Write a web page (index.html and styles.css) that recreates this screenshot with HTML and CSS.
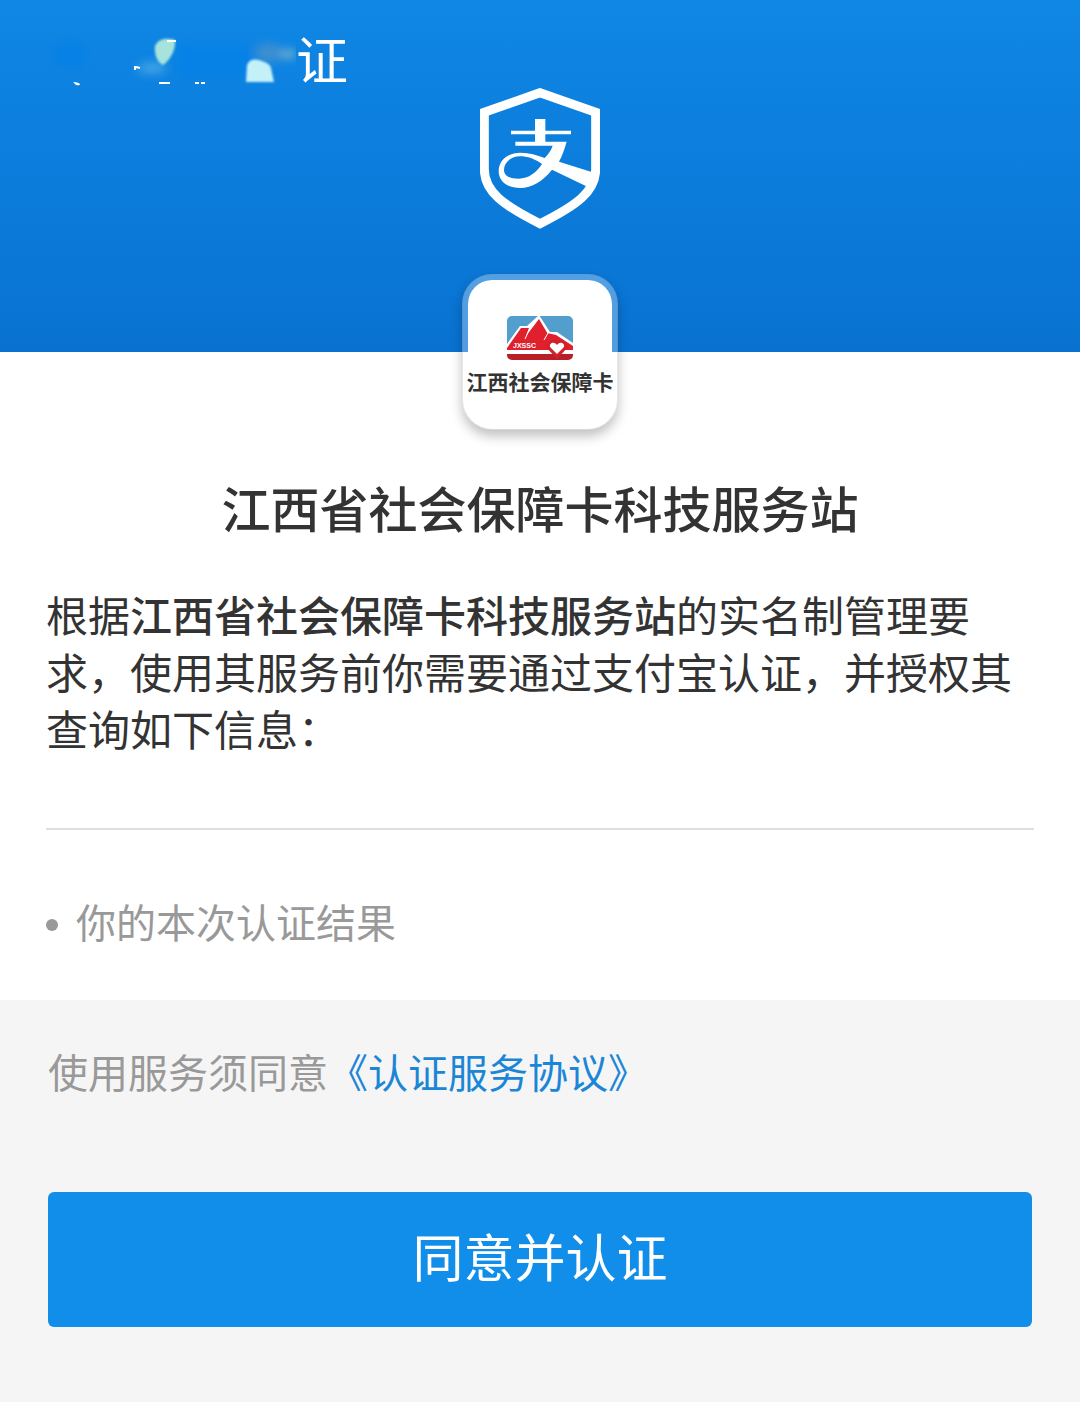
FILE: index.html
```html
<!DOCTYPE html>
<html lang="zh-CN">
<head>
<meta charset="utf-8">
<meta name="viewport" content="width=device-width, initial-scale=1">
<title>认证</title>
<link rel="stylesheet" href="styles.css">
</head>
<body>
<div class="page">
  <header class="hero">
    <div class="title-row">
      <svg class="smudge" viewBox="0 0 250 54" aria-hidden="true">
        <defs>
          <filter id="soft"><feGaussianBlur stdDeviation="1"/></filter>
          <filter id="haze" filterUnits="userSpaceOnUse" x="-20" y="-20" width="290" height="94"><feGaussianBlur stdDeviation="5"/></filter>
        </defs>
        <g filter="url(#haze)">
          <ellipse cx="24" cy="20" rx="18" ry="14" fill="#0a80ea" opacity="0.5"/>
          <rect x="130" y="10" width="76" height="34" fill="#0a80ea" opacity="0.6"/>
          <ellipse cx="222" cy="19" rx="13" ry="10" fill="#3e8fd0"/>
          <ellipse cx="106" cy="34" rx="14" ry="5" fill="#4aa9e4"/>
          <ellipse cx="242" cy="20" rx="9" ry="4" fill="#7fb6cb"/>
        </g>
        <path filter="url(#soft)" d="M109 12 C112 5 120 3 129 6 C130 16 124 26 117 31 C111 28 108 20 109 12Z" fill="#a6e3dc"/>
        <path filter="url(#soft)" d="M200 48 L201 31 Q204 24 213 26 Q224 29 225 34 L228 48Z" fill="#c4f0f8"/>
        <path d="M121 7h9M89 32v4M90 33l4 1M113 49h11M149 49h4M155 49h4" fill="none" stroke="#fff" stroke-width="2"/>
        <path d="M27 48q5 0 7 2q0 2-4 1z" fill="#fff"/>
      </svg>
      <h1 class="title">证</h1>
    </div>
    <svg class="shield" viewBox="60 54 360 423" role="img" aria-label="支付宝">
      <path d="M240 68 L407 127 V298 C407 365 350 406 240 461 C130 406 73 365 73 298 V127Z" fill="none" stroke="#fff" stroke-width="27"/>
      <path d="M225 147h31v35h77v11h-77v23h-31v-23h-72v-11h72z" fill="#fff"/>
      <path fill-rule="evenodd" d="M166 215H320C313 240 306 258 297 275L402 308L382 350L276 299C248 334 215 354 181 354C139 354 116 332 116 303C116 272 142 248 182 248C208 248 230 255 254 264C265 253 273 241 278 227H166ZM246 282C223 266 203 259 180 259C151 259 132 279 132 299C132 318 150 326 176 326C207 326 230 306 246 282Z" fill="#fff"/>
    </svg>
    <div class="app-card">
      <svg class="app-logo" viewBox="0 0 66 44" aria-hidden="true">
        <defs><clipPath id="badge"><rect width="66" height="44" rx="5"/></clipPath></defs>
        <g clip-path="url(#badge)">
          <rect width="66" height="44" fill="#529fcd"/>
          <path d="M0 28L13 10L20 10L32-1L43 16L50 16L66 27V44H0Z" fill="#fff"/>
          <path d="M0 32L14 12H22L19 20L32 3L42 20L40 17L49 19L66 30V34H0Z" fill="#e0202c"/>
          <path d="M18 23L23 12M37 24L41 17" stroke="#fff" stroke-width="1"/>
          <path d="M0 34H66V38H0Z" fill="#fff"/>
          <path d="M0 38H66V44H0Z" fill="#b81f27"/>
          <path d="M39 31L44 24H56L61 31L50 43Z" fill="#cf202b"/>
          <path d="M50 38L43 31C42 27 47 25 50 29C53 25 58 27 57 31Z" fill="#fff"/>
        </g>
        <text x="6" y="32" class="logo-text">JXSSC</text>
      </svg>
      <span class="app-name">江西社会保障卡</span>
    </div>
  </header>

  <main class="content">
    <h2 class="org">江西省社会保障卡科技服务站</h2>
    <p class="intro">根据<strong>江西省社会保障卡科技服务站</strong>的实名制管理要求，使用其服务前你需要通过支付宝认证，并授权其查询如下信息：</p>
    <hr class="divider">
    <ul class="scopes">
      <li class="scope">你的本次认证结果</li>
    </ul>
  </main>

  <footer class="actions">
    <p class="agreement">使用服务须同意<a href="#agreement">《认证服务协议》</a></p>
    <button class="submit" type="button">同意并认证</button>
  </footer>
</div>
</body>
</html>
```
FILE: styles.css
```css
* {
  box-sizing: border-box;
}

body {
  margin: 0;
  background: #f5f5f5;
  color: #333;
  font-family: "Noto Sans CJK SC", sans-serif;
}

.page {
  min-height: 100vh;
  display: flex;
  flex-direction: column;
}

.hero {
  position: relative;
  z-index: 1;
  display: flex;
  flex-direction: column;
  align-items: center;
  padding-top: 34px;
  background: linear-gradient(#0f87e5, #0972d1);
}

.title-row {
  align-self: stretch;
  display: flex;
  align-items: flex-start;
  padding: 0 46px;
}

.smudge {
  width: 250px;
  height: 54px;
  flex: none;
}

.title {
  margin: 0;
  color: #fff;
  font-size: 52px;
  font-weight: 400;
  line-height: 48px;
}

.shield {
  width: 120px;
  height: 141px;
}

.app-card {
  display: flex;
  flex-direction: column;
  align-items: center;
  width: 156px;
  height: 156px;
  margin: 45px 0 -78px;
  padding-top: 36px;
  border: 6px solid rgba(255, 255, 255, 0.3);
  border-radius: 30px;
  background: #fff;
  background-clip: padding-box;
  box-shadow: 0 6px 12px rgba(0, 0, 0, 0.25);
}

.app-logo {
  width: 66px;
  height: 44px;
}

.logo-text {
  fill: #fff;
  font: 700 7px "Liberation Sans", sans-serif;
}

.app-name {
  font-size: 21px;
  font-weight: 700;
  line-height: 42px;
  white-space: nowrap;
}

.content {
  padding: 123px 46px 51px;
  background: #fff;
}

.org {
  margin: 0;
  font-size: 49px;
  font-weight: 500;
  line-height: 64px;
  text-align: center;
}

.intro {
  margin: 46px 0 72px;
  font-size: 42px;
  line-height: 57px;
}

.intro strong {
  font-weight: 500;
}

.divider {
  height: 2px;
  margin: 0;
  border: 0;
  background: #dcdfdf;
}

.scopes {
  margin: 63px 0 0;
  padding: 0;
  list-style: none;
}

.scope {
  display: flex;
  align-items: center;
  gap: 18px;
  color: #999;
  font-size: 40px;
  line-height: 56px;
}

.scope::before {
  content: "";
  width: 12px;
  height: 12px;
  margin-top: 8px;
  border-radius: 50%;
  background: #999;
}

.actions {
  padding: 43px 48px 74px;
}

.agreement {
  margin: 0 0 93px;
  color: #999;
  font-size: 40px;
  line-height: 56px;
}

.agreement a {
  color: #1c86d6;
  text-decoration: none;
}

.submit {
  display: block;
  width: 100%;
  padding: 28px 0 36px;
  border: 0;
  border-radius: 6px;
  background: #108ee9;
  color: #fff;
  font: 400 51px/71px "Noto Sans CJK SC", sans-serif;
}
```
